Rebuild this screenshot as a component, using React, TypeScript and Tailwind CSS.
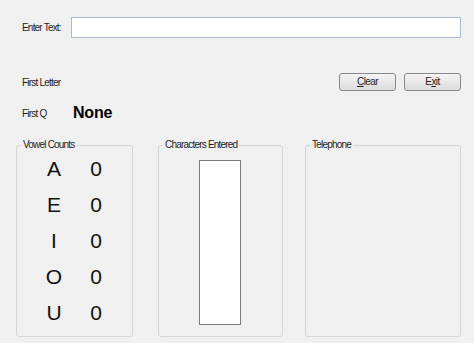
const label = "text-[10px] tracking-[-0.8px] text-[#1e1e1e]";

function GroupBox({ title, className, children }: { title: string; className: string; children?: React.ReactNode }) {
  return (
    <fieldset className={`border border-[#d5d5d5] rounded-[3px] h-[198px] ${className}`}>
      <legend className={`ml-[4px] px-[2px] leading-[12px] ${label}`}>{title}</legend>
      {children}
    </fieldset>
  );
}

function WinButton({ children }: { children: React.ReactNode }) {
  return (
    <button className="w-[57px] h-[18px] rounded-[3px] border border-[#8a8a8a] bg-gradient-to-b from-[#f4f4f4] to-[#dcdcdc] text-[10px] tracking-[-0.6px] text-[#1e1e1e] leading-none">
      {children}
    </button>
  );
}

export default function App() {
  const vowels = ['A', 'E', 'I', 'O', 'U'];

  return (
    <div className="w-[474px] h-[343px] bg-[#f0f0f0] flex flex-col pt-[17px] font-['Liberation_Sans',Arial,sans-serif] overflow-hidden">
      {/* Text entry */}
      <div className="flex items-center h-[21px]">
        <span className={`${label} ml-[22px] w-[49px]`}>Enter Text:</span>
        <input className="w-[390px] h-[21px] bg-white border border-[#a9bbcf] outline-none" />
      </div>

      {/* First letter + buttons */}
      <div className="flex items-center h-[18px] mt-[35px]">
        <span className={`${label} ml-[22px] flex-1`}>First Letter</span>
        <div className="flex gap-[8px] mr-[13px]">
          <WinButton><span className="underline">C</span>lear</WinButton>
          <WinButton>E<span className="underline">x</span>it</WinButton>
        </div>
      </div>

      {/* First Q */}
      <div className="flex items-center h-[20px] mt-[12px]">
        <span className={`${label} ml-[22px] w-[51px]`}>First Q</span>
        <span className="text-[16px] font-bold text-black tracking-[-0.2px]">None</span>
      </div>

      {/* Group boxes */}
      <div className="flex mt-[16px]">
        <GroupBox title="Vowel Counts" className="ml-[16px] w-[117px]">
          <div className="grid grid-cols-[28px_28px] gap-x-[14px] pl-[23px]">
            {vowels.map((v) => (
              <div key={v} className="contents">
                <div className="h-[36px] flex items-center justify-center text-[21px] text-[#111]">{v}</div>
                <div className="h-[36px] flex items-center justify-center text-[21px] text-[#111]">0</div>
              </div>
            ))}
          </div>
        </GroupBox>

        <GroupBox title="Characters Entered" className="ml-[25px] w-[125px]">
          <div className="mt-[9px] ml-[40px] w-[42px] h-[165px] bg-white border border-[#7a7a7a]" />
        </GroupBox>

        <GroupBox title="Telephone" className="ml-[22px] w-[156px]" />
      </div>
    </div>
  );
}
